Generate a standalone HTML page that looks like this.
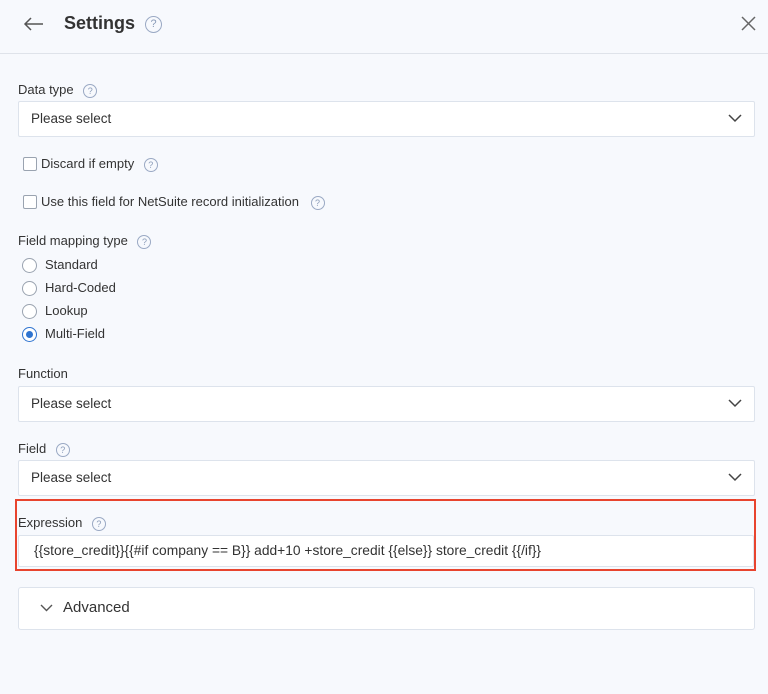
<!DOCTYPE html>
<html><head><style>
*{box-sizing:border-box;margin:0;padding:0}
body{width:768px;height:694px;background:#f7f9fd;font-family:"Liberation Sans",sans-serif;color:#333;position:relative;overflow:hidden;font-size:13px}
.a{position:absolute}
.hdr{left:0;top:0;width:768px;height:54px;border-bottom:1px solid #dfe3ea;background:#f7f9fd}
.q{display:inline-block;width:14px;height:14px;border:1px solid #9aa9c4;border-radius:50%;color:#8a9bb8;font-size:9px;text-align:center;line-height:12px;vertical-align:middle}
.lbl{left:18px;font-size:13px;color:#333}
.sel{left:18px;width:737px;height:36px;background:#fff;border:1px solid #dde3ec;border-radius:2px;font-size:13.5px;padding-left:12px;line-height:34px;color:#333}
.sel svg{position:absolute;right:12px;top:12px}
.cb{width:14px;height:14px;border:1.5px solid #9aa3b0;border-radius:2px;background:#fff}
.rd{left:22px;width:15px;height:15px;border:1.5px solid #9aa3b0;border-radius:50%;background:#fff}
.rt{left:45px;font-size:13px}
</style></head><body>
<div class="a hdr"></div>
<svg class="a" style="left:23px;top:16px" width="21" height="16" viewBox="0 0 21 16"><path d="M20 8H2M8 2L2 8l6 6" fill="none" stroke="#555" stroke-width="1.5"/></svg>
<div class="a" style="left:64px;top:13px;font-size:18px;font-weight:bold;color:#333">Settings</div>
<div class="a q" style="left:145px;top:16px;width:17px;height:17px;line-height:15px;font-size:11px">?</div>
<svg class="a" style="left:741px;top:16px" width="15" height="15" viewBox="0 0 15 15"><path d="M1 1l13 13M14 1L1 14" stroke="#666" stroke-width="1.5"/></svg>

<div class="a lbl" style="top:82px">Data type <span class="q" style="margin-left:6px">?</span></div>
<div class="a sel" style="top:101px">Please select<svg width="14" height="9" viewBox="0 0 14 9"><path d="M1 1l6 6 6-6" fill="none" stroke="#444" stroke-width="1.5"/></svg></div>

<div class="a cb" style="left:23px;top:157px"></div>
<div class="a" style="left:41px;top:156px">Discard if empty <span class="q" style="margin-left:6px">?</span></div>
<div class="a cb" style="left:23px;top:195px"></div>
<div class="a" style="left:41px;top:194px">Use this field for NetSuite record initialization <span class="q" style="margin-left:8px">?</span></div>

<div class="a lbl" style="top:233px">Field mapping type <span class="q" style="margin-left:6px">?</span></div>
<div class="a rd" style="top:258px"></div><div class="a rt" style="top:257px">Standard</div>
<div class="a rd" style="top:281px"></div><div class="a rt" style="top:280px">Hard-Coded</div>
<div class="a rd" style="top:304px"></div><div class="a rt" style="top:303px">Lookup</div>
<div class="a rd" style="top:327px;border-color:#2f74d0"><div style="width:7px;height:7px;border-radius:50%;background:#2f74d0;margin:2.5px"></div></div><div class="a rt" style="top:326px">Multi-Field</div>

<div class="a lbl" style="top:366px">Function</div>
<div class="a sel" style="top:386px">Please select<svg width="14" height="9" viewBox="0 0 14 9"><path d="M1 1l6 6 6-6" fill="none" stroke="#444" stroke-width="1.5"/></svg></div>

<div class="a lbl" style="top:441px">Field <span class="q" style="margin-left:6px">?</span></div>
<div class="a sel" style="top:460px">Please select<svg width="14" height="9" viewBox="0 0 14 9"><path d="M1 1l6 6 6-6" fill="none" stroke="#444" stroke-width="1.5"/></svg></div>

<div class="a" style="left:15px;top:499px;width:741px;height:72px;border:2px solid #e8442e"></div>
<div class="a lbl" style="top:515px">Expression <span class="q" style="margin-left:6px">?</span></div>
<div class="a sel" style="top:535px;height:32px;line-height:30px;padding-left:15px;font-size:13.8px;width:736px">{{store_credit}}{{#if company == B}} add+10 +store_credit {{else}} store_credit {{/if}}</div>

<div class="a" style="left:18px;top:587px;width:737px;height:43px;background:#fff;border:1px solid #dde3ec;border-radius:3px"></div>
<svg class="a" style="left:40px;top:604px" width="13" height="8" viewBox="0 0 13 8"><path d="M1 1l5.5 5.5L12 1" fill="none" stroke="#555" stroke-width="1.4"/></svg>
<div class="a" style="left:63px;top:599px;font-size:15px;color:#333">Advanced</div>
</body></html>
